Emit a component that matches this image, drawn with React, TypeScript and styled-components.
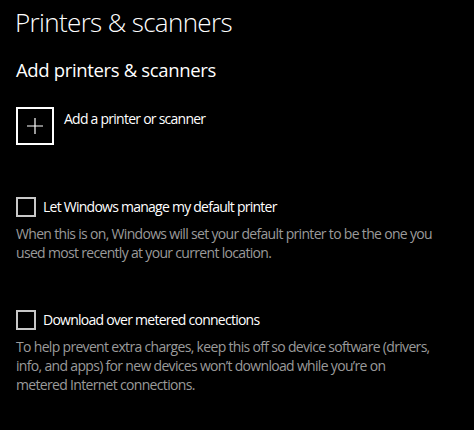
import React from "react";
import styled, { createGlobalStyle } from "styled-components";

const Global = createGlobalStyle`
  html, body { margin: 0; padding: 0; background: #000; }
  body { font-family: "Open Sans", "Noto Sans", sans-serif; color: #fff; }
`;

const Page = styled.div`
  width: 474px;
  height: 430px;
  background: #000;
  padding: 0 0 0 16px;
  box-sizing: border-box;
  overflow: hidden;
  display: flex;
  flex-direction: column;
`;

const Title = styled.h1`
  margin: 4px 0 0 -1px;
  font-size: 26px;
  font-weight: 300;
  line-height: 36px;
  letter-spacing: -0.65px;
  color: #fff;
`;

const Subtitle = styled.h2`
  margin: 17px 0 0 0;
  font-size: 18.5px;
  font-weight: 400;
  line-height: 26px;
  letter-spacing: -0.35px;
  color: #fff;
`;

const AddRow = styled.div`
  display: flex;
  align-items: flex-start;
  gap: 10px;
  margin-top: 24px;
`;

const PlusBox = styled.div`
  width: 38px;
  height: 38px;
  box-sizing: border-box;
  border: 2px solid #fff;
  display: flex;
  align-items: center;
  justify-content: center;
`;

const AddLabel = styled.span`
  font-size: 14px;
  line-height: 20px;
  margin-top: 2px;
  letter-spacing: -0.75px;
  color: #fff;
`;

const Option = styled.div<{ $top: number }>`
  margin-top: ${(p) => p.$top}px;
  display: flex;
  flex-direction: column;
`;

const CheckRow = styled.label`
  display: flex;
  align-items: center;
  gap: 7px;
`;

const Box = styled.span`
  width: 20px;
  height: 20px;
  box-sizing: border-box;
  border: 2px solid #c8c8c8;
  flex: none;
`;

const CheckLabel = styled.span`
  font-size: 14px;
  line-height: 20px;
  letter-spacing: -0.75px;
  color: #fff;
`;

const Desc = styled.p`
  margin: 7px 0 0 0;
  font-size: 14px;
  line-height: 19.3px;
  letter-spacing: -0.68px;
  color: #9a9a9a;
  width: 420px;
`;

export default function App() {
  return (
    <Page>
      <Global />
      <Title>Printers &amp; scanners</Title>
      <Subtitle>Add printers &amp; scanners</Subtitle>
      <AddRow>
        <PlusBox>
          <svg width="18" height="18" viewBox="0 0 18 18">
            <path d="M9 1v16M1 9h16" stroke="#fff" strokeWidth="1.2" fill="none" />
          </svg>
        </PlusBox>
        <AddLabel>Add a printer or scanner</AddLabel>
      </AddRow>
      <Option $top={52}>
        <CheckRow>
          <Box />
          <CheckLabel>Let Windows manage my default printer</CheckLabel>
        </CheckRow>
        <Desc>
          When this is on, Windows will set your default printer to be the one you
          used most recently at your current location.
        </Desc>
      </Option>
      <Option $top={47}>
        <CheckRow>
          <Box />
          <CheckLabel>Download over metered connections</CheckLabel>
        </CheckRow>
        <Desc>
          To help prevent extra charges, keep this off so device software (drivers,
          info, and apps) for new devices won’t download while you’re on metered
          Internet connections.
        </Desc>
      </Option>
    </Page>
  );
}
